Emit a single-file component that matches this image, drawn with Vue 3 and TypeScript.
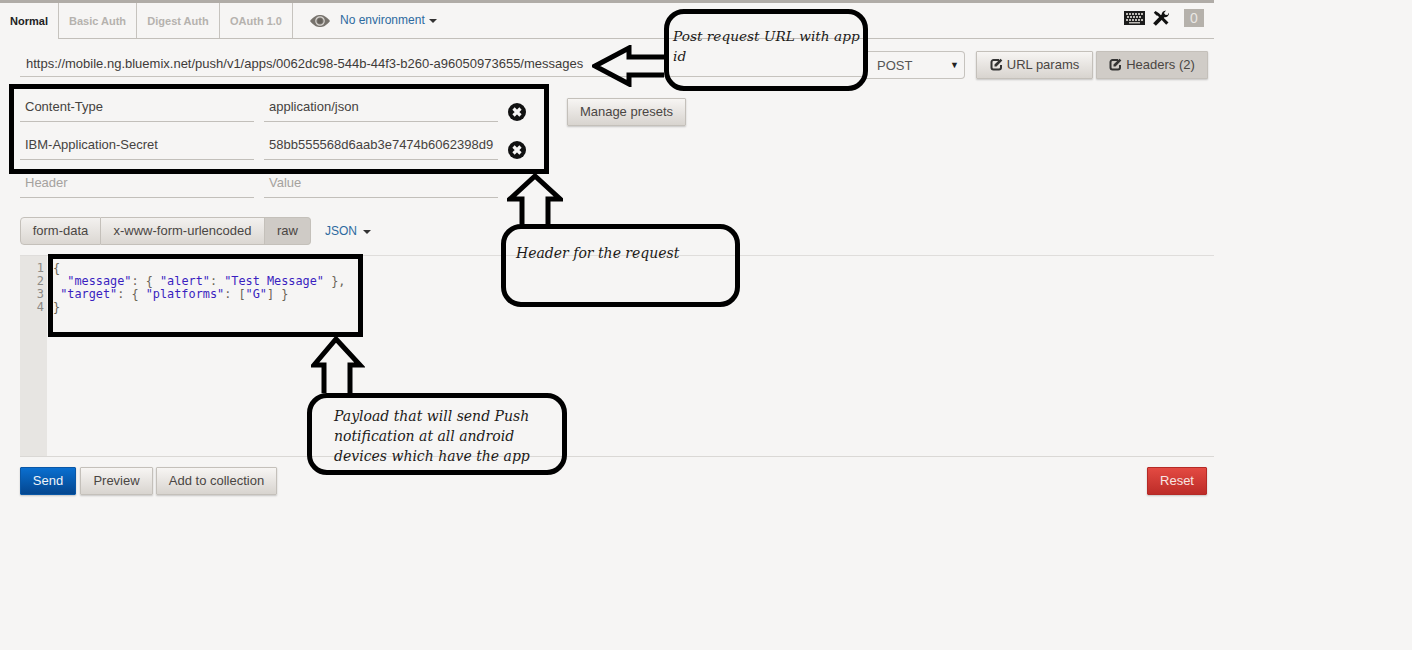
<script setup lang="ts">
const tabs = ['Basic Auth', 'Digest Auth', 'OAuth 1.0']
const rows = [
  { key: 'Content-Type', value: 'application/json' },
  { key: 'IBM-Application-Secret', value: '58bb555568d6aab3e7474b6062398d9' },
]
</script>

<template>
  <div class="page">
    <div class="builder">
      <header class="topbar">
        <div class="tab active">Normal</div>
        <div v-for="t in tabs" :key="t" class="tab">{{ t }}</div>
        <svg class="eye" width="20" height="12" viewBox="0 0 20 12">
          <path d="M0 6C4 1 7 0 10 0s6 1 10 6c-4 5-7 6-10 6S4 11 0 6z" fill="#77736d" />
          <circle cx="10" cy="6" r="4.2" fill="none" stroke="#d8d5d1" stroke-width="1.2" />
          <circle cx="10" cy="6" r="2.4" fill="#66625c" />
        </svg>
        <span class="env">No environment</span>
        <span class="caret dark"></span>
        <div class="tools">
          <svg width="21" height="14" viewBox="0 0 21 14">
            <rect width="21" height="14" fill="#1c1c1c" />
            <g fill="#bdbab5">
              <rect x="2" y="2" width="2" height="2" /><rect x="5" y="2" width="2" height="2" /><rect x="8" y="2" width="2" height="2" /><rect x="11" y="2" width="2" height="2" /><rect x="14" y="2" width="2" height="2" /><rect x="17" y="2" width="2" height="2" />
              <rect x="3" y="5" width="2" height="2" /><rect x="6" y="5" width="2" height="2" /><rect x="9" y="5" width="2" height="2" /><rect x="12" y="5" width="2" height="2" /><rect x="15" y="5" width="2" height="2" />
              <rect x="2" y="8" width="2" height="2" /><rect x="5" y="8" width="2" height="2" /><rect x="8" y="8" width="2" height="2" /><rect x="11" y="8" width="2" height="2" /><rect x="14" y="8" width="2" height="2" /><rect x="17" y="8" width="2" height="2" />
              <rect x="5" y="11" width="11" height="1.5" />
            </g>
          </svg>
          <svg class="wrench" width="16" height="16" viewBox="0 0 16 16">
            <path d="M1.500 14.500 10 5.800" stroke="#111" stroke-width="3.800" />
            <path d="M9 6.500C7.800 3.800 9.500.6 13 .5l-2 2.500 1.200 1.800 2.300.2L16 2.800C16.400 6.200 13 8.600 9 6.500z" fill="#111" />
            <path d="M2.500 1 .8 2.700 3.500 5.500l1.300.3 8.400 8.900 2.300-2.300-8.800-8.400L6 3.200z" fill="#111" />
          </svg>
          <span class="badge">0</span>
        </div>
      </header>

      <section class="url-row">
        <div class="url">https://mobile.ng.bluemix.net/push/v1/apps/0062dc98-544b-44f3-b260-a96050973655/messages</div>
        <div class="method">POST<span class="arrow">▼</span></div>
        <button class="btn param">
          <svg class="edit" width="13" height="13" viewBox="0 0 13 13"><path d="M9 2H3.500A2 2 0 0 0 1.500 4v5.500a2 2 0 0 0 2 2H9a2 2 0 0 0 2-2V7" fill="none" stroke="#333" stroke-width="2" /><path d="M4.500 6.500 10.500.8l1.800 1.800-5.800 6H4.500z" fill="#333" /></svg>
          URL params
        </button>
        <button class="btn param pressed">
          <svg class="edit" width="13" height="13" viewBox="0 0 13 13"><path d="M9 2H3.500A2 2 0 0 0 1.500 4v5.500a2 2 0 0 0 2 2H9a2 2 0 0 0 2-2V7" fill="none" stroke="#333" stroke-width="2" /><path d="M4.500 6.500 10.500.8l1.800 1.800-5.800 6H4.500z" fill="#333" /></svg>
          Headers (2)
        </button>
      </section>

      <section class="headers">
        <div class="header-list">
          <div v-for="r in rows" :key="r.key" class="kv">
            <div class="cell">{{ r.key }}</div>
            <div class="cell">{{ r.value }}</div>
            <svg class="del" width="18" height="18" viewBox="0 0 18 18">
              <circle cx="9" cy="9" r="9" fill="#111" />
              <path d="M5.500 5.500 12.500 12.500M12.500 5.500 5.500 12.500" stroke="#f6f5f4" stroke-width="3.200" />
            </svg>
          </div>
          <div class="kv">
            <div class="cell ph">Header</div>
            <div class="cell ph">Value</div>
          </div>
        </div>
        <button class="btn presets">Manage presets</button>
      </section>

      <section class="modes">
        <div class="group">
          <button class="seg s1">form-data</button>
          <button class="seg s2">x-www-form-urlencoded</button>
          <button class="seg s3 pressed">raw</button>
        </div>
        <span class="json">JSON</span>
        <span class="caret dark small"></span>
      </section>

      <section class="editor">
        <div class="gutter"><div>1</div><div>2</div><div>3</div><div>4</div></div>
        <pre class="code"><span class="p">{</span>
  <span class="s">"message"</span><span class="p">: { </span><span class="s">"alert"</span><span class="p">: </span><span class="s">"Test Message"</span><span class="p"> },</span>
 <span class="s">"target"</span><span class="p">: { </span><span class="s">"platforms"</span><span class="p">: [</span><span class="s">"G"</span><span class="p">] }</span>
<span class="p">}</span></pre>
      </section>

      <footer class="actions">
        <button class="btn send">Send</button>
        <button class="btn preview">Preview</button>
        <button class="btn add">Add to collection</button>
        <button class="btn reset">Reset</button>
      </footer>
    </div>

    <div class="frame f1"></div>
    <div class="frame f2"></div>

    <svg class="arrow-svg a1" width="76" height="42" viewBox="0 0 76 42">
      <path d="M72 12H37V3L3 21l34 18V30h35" fill="none" stroke="#000" stroke-width="5" />
    </svg>
    <svg class="arrow-svg a2" width="56" height="52" viewBox="0 0 56 52">
      <path d="M15 50V25H3L28 2l25 23H41v25" fill="none" stroke="#000" stroke-width="5" />
    </svg>
    <svg class="arrow-svg a3" width="54" height="58" viewBox="0 0 54 58">
      <path d="M13 56V28H3L25 2l24 26H39v28" fill="none" stroke="#000" stroke-width="5" />
    </svg>

    <div class="callout c1">Post request URL with app id</div>
    <div class="callout c2">Header for the request</div>
    <div class="callout c3">Payload that will send Push notification at all android devices which have the app</div>
  </div>
</template>

<style>
html, body { margin: 0; background: #f6f5f4; }
</style>

<style scoped>
.page {
  position: relative;
  width: 1412px;
  height: 650px;
  overflow: hidden;
  background: #f6f5f4;
  font-family: "Liberation Sans", Arial, sans-serif;
  font-size: 13px;
  color: #454240;
}
.builder { width: 1214px; }

.topbar {
  display: flex;
  align-items: center;
  height: 35px;
  border-top: 3px solid #b0aca7;
  border-bottom: 1px solid #c2bfba;
}
.tab {
  display: flex;
  align-items: center;
  justify-content: center;
  height: 35px;
  box-sizing: border-box;
  border-right: 1px solid #c6c3be;
  font-size: 11px;
  font-weight: 700;
  color: #b5b2ae;
  width: 78px;
}
.tab:nth-child(3) { width: 83px; }
.tab:nth-child(4) { width: 73px; }
.tab.active {
  width: 59px;
  height: 36px;
  margin-top: 1px;
  padding-bottom: 1px;
  color: #222;
  background: #f6f5f4;
}
.eye { margin-left: 17px; margin-top: 1px; }
.env { margin-left: 10px; font-size: 12px; color: #2d6a9f; margin-top: -1px; }
.caret {
  width: 0;
  height: 0;
  border-left: 4px solid transparent;
  border-right: 4px solid transparent;
  border-top: 4px solid #333;
  margin-left: 4px;
}
.tools { display: flex; align-items: center; margin-left: auto; margin-right: 10px; margin-top: -6px; }
.wrench { margin-left: 8px; }
.badge {
  width: 20px;
  height: 18px;
  margin-left: 15px;
  background: #b5b1ab;
  color: #e9e7e4;
  font-size: 14px;
  line-height: 18px;
  text-align: center;
}

.url-row { display: flex; align-items: flex-start; padding: 12px 6px 0 20px; height: 33px; }
.url {
  width: 843px;
  height: 26px;
  padding: 5px 0 0 6px;
  box-sizing: border-box;
  border-bottom: 1px solid #c6c3be;
  font-size: 13px;
  color: #3e3b39;
  white-space: nowrap;
}
.method {
  position: relative;
  box-sizing: border-box;
  width: 102px;
  height: 28px;
  padding: 6px 0 0 14px;
  border: 1px solid #c6c3be;
  border-left: 0;
  border-radius: 0 4px 4px 0;
  font-size: 13px;
  color: #555;
}
.arrow { position: absolute; right: 5px; top: 8px; font-size: 9px; color: #222; }

.btn {
  box-sizing: border-box;
  height: 28px;
  padding: 0 0 2px;
  border: 1px solid #c4c0ba;
  border-radius: 1px;
  background: linear-gradient(#f7f5f3, #d8d4cf);
  box-shadow: 0 1px 2px rgba(0, 0, 0, .2);
  font-family: inherit;
  font-size: 13px;
  color: #4a4643;
}
.param { width: 117px; margin-left: 11px; display: flex; align-items: center; justify-content: center; gap: 4px; }
.param.pressed { width: 112px; margin-left: 3px; background: #d0ccc7; }
.edit { flex: none; }

.headers { display: flex; align-items: flex-start; padding: 0 0 0 20px; }
.header-list { width: 547px; padding-top: 8px; }
.kv { display: flex; height: 38px; position: relative; }
.cell {
  width: 234px;
  height: 30px;
  margin-right: 10px;
  padding: 7px 0 0 5px;
  box-sizing: border-box;
  border-bottom: 1px solid #c2bfba;
  font-size: 13px;
  color: #454240;
  white-space: nowrap;
  overflow: hidden;
}
.cell.ph { color: #a5a29e; }
.del { position: absolute; left: 488px; top: 11px; }
.presets { width: 119px; margin-top: 14px; }

.modes { display: flex; align-items: center; padding: 11px 0 0 20px; height: 28px; }
.group { display: flex; }
.seg {
  box-sizing: border-box;
  height: 28px;
  padding: 0 0 2px;
  border: 1px solid #c4c0ba;
  border-left: 0;
  background: linear-gradient(#f3f1ef, #dbd7d2);
  font-family: inherit;
  font-size: 13px;
  color: #4a4643;
}
.s1 { width: 81px; border-left: 1px solid #c4c0ba; border-radius: 4px 0 0 4px; }
.s2 { width: 164px; }
.s3 { width: 46px; border-radius: 0 4px 4px 0; }
.seg.pressed { background: #cfcbc6; }
.json { margin-left: 14px; font-size: 12px; color: #2d6a9f; }
.caret.small { margin-left: 6px; margin-top: 2px; border-width: 4px 4px 0; }

.editor {
  display: flex;
  height: 200px;
  margin: 10px 0 0 20px;
  border-top: 1px solid #dfdddb;
  border-bottom: 1px solid #dad8d5;
}
.gutter {
  width: 27px;
  box-sizing: border-box;
  padding: 6px 3px 0 0;
  background: #e7e5e2;
  text-align: right;
  font-family: "DejaVu Sans Mono", monospace;
  font-size: 12px;
  line-height: 13px;
  color: #8d8a86;
}
.code {
  margin: 0;
  padding: 6px 0 0 6px;
  font-family: "DejaVu Sans Mono", monospace;
  font-size: 11.850px;
  line-height: 13px;
}
.s { color: #3a1fc0; }
.p { color: #6a6455; }

.actions { display: flex; padding: 10px 7px 0 20px; }
.send {
  width: 56px;
  border-color: #0a57a6;
  background: linear-gradient(#0a6fd0, #04468f);
  color: #f1f4f8;
}
.preview { width: 73px; margin-left: 4px; }
.add { width: 121px; margin-left: 3px; }
.reset {
  width: 60px;
  margin-left: auto;
  border-color: #b52a26;
  background: linear-gradient(#e34a42, #bd2c28);
  color: #f7e5e3;
}

.frame { position: absolute; box-sizing: border-box; border: 5px solid #000; }
.f1 { left: 9px; top: 84px; width: 540px; height: 90px; }
.f2 { left: 48px; top: 254px; width: 315px; height: 83px; }

.arrow-svg { position: absolute; }
.a1 { left: 592px; top: 45px; }
.a2 { left: 507px; top: 174px; }
.a3 { left: 311px; top: 337px; }

.callout {
  position: absolute;
  box-sizing: border-box;
  border: 5px solid #000;
  border-radius: 20px;
  font-family: "DejaVu Serif", serif;
  font-style: italic;
  font-size: 14px;
  line-height: 20px;
  color: #1c1a18;
}
.c1 { left: 664px; top: 9px; width: 204px; height: 82px; padding: 12px 0 0 4px; font-size: 13.700px; }
.c2 { left: 501px; top: 224px; width: 239px; height: 83px; padding: 14px 0 0 10px; }
.c3 { left: 307px; top: 393px; width: 260px; height: 82px; padding: 8px 19px 0 22px; }
</style>
